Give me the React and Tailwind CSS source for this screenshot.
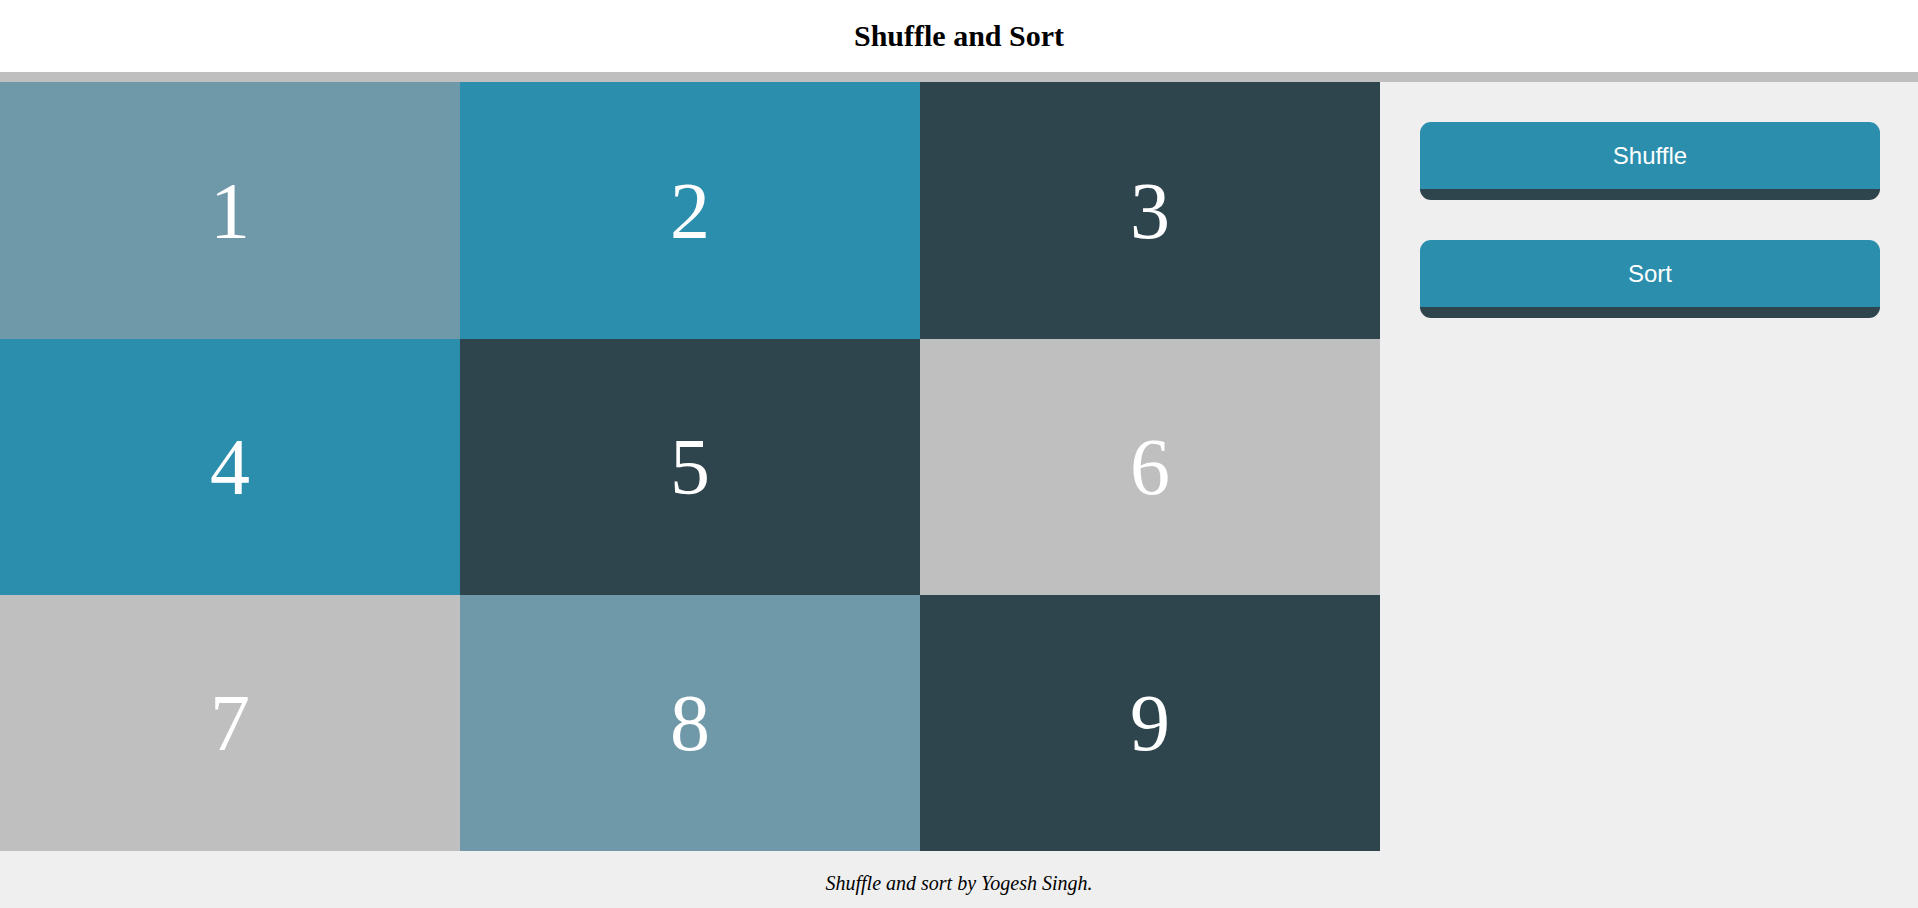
import React from "react";

const cells = [
  { n: 1, c: "bg-[#6f98a8]" },
  { n: 2, c: "bg-[#2b8ead]" },
  { n: 3, c: "bg-[#2f454e]" },
  { n: 4, c: "bg-[#2b8ead]" },
  { n: 5, c: "bg-[#2f454e]" },
  { n: 6, c: "bg-[#bfbfbf]" },
  { n: 7, c: "bg-[#bfbfbf]" },
  { n: 8, c: "bg-[#6f98a8]" },
  { n: 9, c: "bg-[#2f454e]" },
];

export default function App() {
  return (
    <div className="w-[1918px] h-[908px] flex flex-col bg-[#efefef] overflow-hidden">
      <header className="h-[82px] shrink-0 bg-white border-b-[10px] border-[#bfbfbf] flex items-center justify-center">
        <h1 className="text-[30px] font-bold text-black font-['Liberation_Serif','Times_New_Roman',serif] leading-none">
          Shuffle and Sort
        </h1>
      </header>
      <div className="flex">
        <div className="w-[1380px] grid grid-cols-3 grid-rows-[257px_256px_256px]">
          {cells.map((cell) => (
            <div
              key={cell.n}
              className={`${cell.c} flex items-center justify-center text-white text-[80px] leading-none font-['Liberation_Serif','Times_New_Roman',serif]`}
            >
              {cell.n}
            </div>
          ))}
        </div>
        <div className="flex-1 pl-[40px] pt-[40px] flex flex-col gap-[40px]">
          <button className="w-[460px] h-[78px] bg-[#2b8ead] border-b-[11px] border-[#2f454e] rounded-[11px] text-white text-[24px] font-['Liberation_Sans',Arial,sans-serif] flex items-center justify-center">
            Shuffle
          </button>
          <button className="w-[460px] h-[78px] bg-[#2b8ead] border-b-[11px] border-[#2f454e] rounded-[11px] text-white text-[24px] font-['Liberation_Sans',Arial,sans-serif] flex items-center justify-center">
            Sort
          </button>
        </div>
      </div>
      <footer className="flex-1 flex items-center justify-center pt-[6px]">
        <p className="italic text-[20px] text-black font-['Liberation_Serif','Times_New_Roman',serif]">
          Shuffle and sort by Yogesh Singh.
        </p>
      </footer>
    </div>
  );
}
